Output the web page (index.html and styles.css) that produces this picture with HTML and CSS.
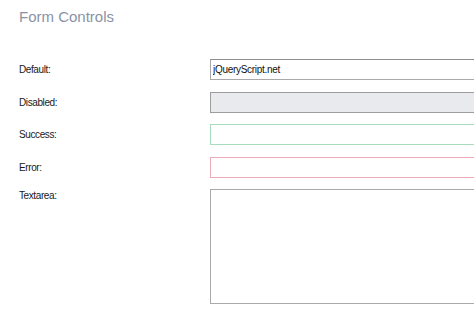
FILE: index.html
```html
<!DOCTYPE html>
<html lang="en">
<head>
    <meta charset="UTF-8">
    <meta name="viewport" content="width=device-width, initial-scale=1.0">
    <title>Form Controls</title>
    <link rel="stylesheet" href="styles.css">
</head>
<body>

<div class="container">
    <h1>Form Controls</h1>

    <form class="form-grid">
        <label for="default">Default:</label>
        <input type="text" id="default" value="jQueryScript.net">

        <label for="disabled">Disabled:</label>
        <input type="text" id="disabled" disabled>

        <label for="success">Success:</label>
        <input type="text" id="success" class="success">

        <label for="error">Error:</label>
        <input type="text" id="error" class="error">

        <label for="textarea" class="top">Textarea:</label>
        <textarea id="textarea"></textarea>
    </form>
</div>

</body>
</html>
```

FILE: styles.css
```css
body {
    font-family: "Liberation Sans", Arial, sans-serif;
    margin: 0;
    padding: 0;
    background-color: #fff;
}
.container {
    padding: 8px 19px 0;
    overflow: hidden;
}
h1 {
    font-size: 15px;
    font-weight: normal;
    color: #8a93a6;
    margin: 0 0 34px;
    line-height: 17px;
}
.form-grid {
    display: grid;
    grid-template-columns: 191px 1fr;
    row-gap: 11.5px;
    align-items: center;
}
label {
    font-size: 10px;
    letter-spacing: -0.4px;
    color: #1a1a1a;
}
label.top {
    align-self: start;
    padding-top: 1px;
}
input, textarea {
    box-sizing: border-box;
    width: calc(100% + 40px);
    height: 21px;
    margin: 0;
    padding: 0 2px;
    font-family: "Liberation Sans", Arial, sans-serif;
    font-size: 10px;
    letter-spacing: -0.3px;
    color: #111;
    background-color: #fff;
    border: 1px solid #a9a9a9;
    border-top-color: #8f8f8f;
    outline: none;
}
input:disabled {
    background-color: #e8eaed;
    border-color: #9d9d9d;
}
input.success {
    border-color: #a8dcbc;
}
input.error {
    border-color: #eeaab6;
}
textarea {
    height: 115px;
    resize: none;
    border-color: #aaa;
}
```
